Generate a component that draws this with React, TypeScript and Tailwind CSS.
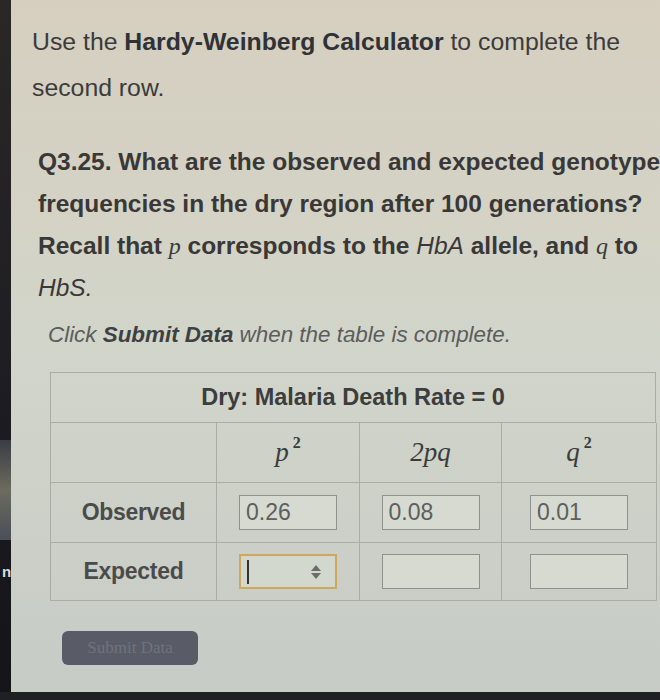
import React from "react";

const sans = { fontFamily: '"Liberation Sans", Arial, sans-serif' };
const serif = { fontFamily: '"Liberation Serif", "Times New Roman", serif' };

function Cell({ children, className = "" }: { children?: React.ReactNode; className?: string }) {
  return (
    <div className={`flex items-center justify-center border-r border-b border-[#a9ada6] ${className}`}>
      {children}
    </div>
  );
}

function Box({ value, focus }: { value?: string; focus?: boolean }) {
  return (
    <div
      className={`flex h-[35px] w-[98px] items-center px-[6px] text-[23px] font-normal text-[#5d5f5c] ${
        focus ? "border-2 border-[#cfa85e] bg-[#d3d8ce]" : "border border-[#8e928c] bg-[#d6dad1]"
      }`}
    >
      {focus ? (
        <>
          <span className="h-[24px] w-[1.5px] bg-[#333]" />
          <span className="ml-auto flex flex-col items-center gap-[2px] pr-[8px]">
            <svg width="10" height="6" viewBox="0 0 10 6">
              <path d="M5 0 L10 6 L0 6 Z" fill="#6b6e6b" />
            </svg>
            <svg width="10" height="6" viewBox="0 0 10 6">
              <path d="M0 0 L10 0 L5 6 Z" fill="#6b6e6b" />
            </svg>
          </span>
        </>
      ) : (
        value
      )}
    </div>
  );
}

function Sym({ base, sup, size = "text-[24px]" }: { base: string; sup?: boolean; size?: string }) {
  return (
    <span className={`${size} font-normal italic text-[#3a3c3a]`} style={serif}>
      {base}
      {sup && <sup className="relative -top-[13px] ml-[4px] text-[16px] font-bold not-italic">2</sup>}
    </span>
  );
}

export default function App() {
  return (
    <div
      className="flex h-[700px] w-[660px] flex-col overflow-hidden bg-gradient-to-b from-[#d6cfbf] via-[#d2d5ca] to-[#c6cbc6]"
      style={sans}
    >
      <div className="flex flex-1">
        <div className="flex w-[11px] flex-col bg-gradient-to-b from-[#2a2726] via-[#1f1e22] to-[#141419]">
          <div className="mt-[440px] h-[100px] bg-gradient-to-b from-[#3a3d44] via-[#6c6b5e] to-[#4a4f58]" />
          <div className="mt-[24px] pl-[2px] text-[15px] font-bold leading-none text-[#d9dde0]">n</div>
        </div>

        <div className="flex-1 pl-[21px] pt-[19px]">
          <p className="text-[24.8px] leading-[46px] text-[#3b3b3b] whitespace-nowrap">
            Use the <b className="text-[#2f3236]">Hardy-Weinberg Calculator</b> to complete the
            <br />
            second row.
          </p>

          <p className="mt-[30px] pl-[6px] text-[24.5px] font-bold leading-[42px] text-[#3a3837] whitespace-nowrap">
            Q3.25. What are the observed and expected genotype
            <br />
            frequencies in the dry region after 100 generations?
            <br />
            Recall that <Sym base="p" /> corresponds to the <i className="font-normal">HbA</i> allele, and{" "}
            <Sym base="q" /> to
            <br />
            <i className="font-normal">HbS.</i>
          </p>

          <p className="mt-[12px] pl-[16px] text-[22.4px] italic leading-[28px] text-[#5a5d5c]">
            Click <b className="text-[#3e4142]">Submit Data</b> when the table is complete.
          </p>

          <div className="ml-[18px] mt-[23px] w-[606px] border-l border-t border-[#a9ada6]">
            <div className="flex h-[50px] items-center justify-center border-r border-b border-[#a9ada6] text-[23.5px] font-bold text-[#3c3d3c]">
              Dry: Malaria Death Rate = 0
            </div>
            <div className="grid grid-cols-[166px_143px_142px_155px] text-[23px] font-bold text-[#4a4b4a]">
              <Cell className="h-[60px]" />
              <Cell className="h-[60px]">
                <Sym base="p" sup size="text-[27px]" />
              </Cell>
              <Cell className="h-[60px]">
                <Sym base="2pq" size="text-[27px]" />
              </Cell>
              <Cell className="h-[60px]">
                <Sym base="q" sup size="text-[27px]" />
              </Cell>

              <Cell className="h-[60px] tracking-[-0.3px]">Observed</Cell>
              <Cell className="h-[60px]">
                <Box value="0.26" />
              </Cell>
              <Cell className="h-[60px]">
                <Box value="0.08" />
              </Cell>
              <Cell className="h-[60px]">
                <Box value="0.01" />
              </Cell>

              <Cell className="h-[58px] tracking-[-0.3px]">Expected</Cell>
              <Cell className="h-[58px]">
                <Box focus />
              </Cell>
              <Cell className="h-[58px]">
                <Box />
              </Cell>
              <Cell className="h-[58px]">
                <Box />
              </Cell>
            </div>
          </div>

          <button className="ml-[30px] mt-[30px] h-[34px] w-[136px] rounded-[6px] bg-[#595b66] text-[17px] text-[#70737d]" style={serif}>
            Submit Data
          </button>
        </div>
      </div>
      <div className="h-[8px] bg-[#1f2024]" />
    </div>
  );
}
